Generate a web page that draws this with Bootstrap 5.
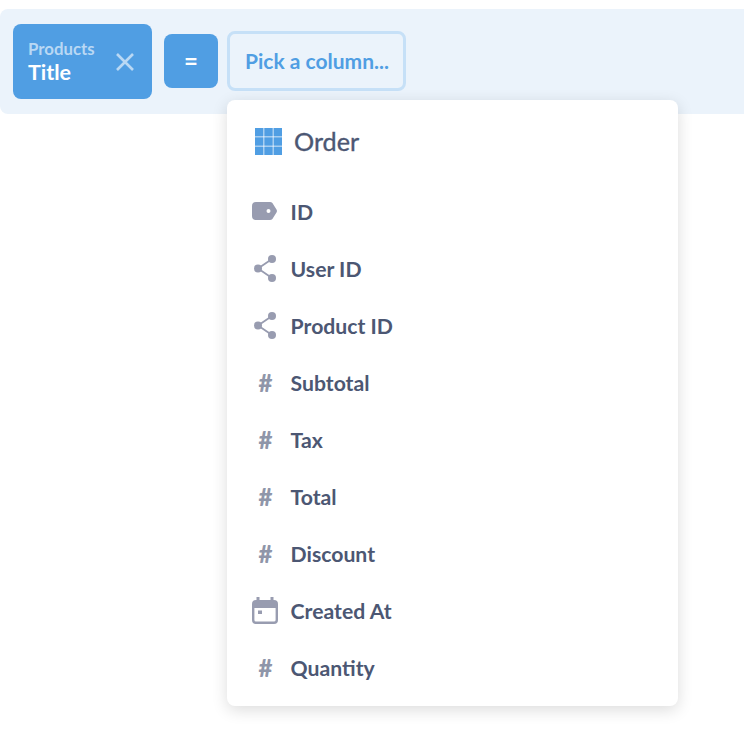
<!DOCTYPE html>
<html lang="en">
<head>
<meta charset="utf-8">
<title>Join column picker</title>
<link href="https://cdn.jsdelivr.net/npm/bootstrap@5.3.0/dist/css/bootstrap.min.css" rel="stylesheet">
<style>
body { font-family: Lato, "Liberation Sans", sans-serif; background: #fff; color: #4c5773; font-weight: 700; overflow: hidden; }
.stage { position: relative; padding-top: 9px; height: 735px; }
.join-bar { height: 105px; background: #ebf3fb; border-radius: 8px 0 0 8px; padding-left: 13px; }
.field-chip { width: 139px; height: 75px; background: #509ee3; border-radius: 8px; color: #fff; padding-left: 15px; padding-right: 18px; }
.chip-table { font-size: 16.800px; line-height: 20px; color: #b9d8f4; margin-top: -1px; }
.chip-col { font-size: 21.500px; line-height: 24px; margin-top: 1px; }
.op-btn { width: 54px; height: 54px; margin-bottom: 1px; background: #509ee3; border-radius: 8px; color: #fff; font-size: 24px; margin-left: 12px; }
.pick-btn { width: 179px; height: 60px; margin-bottom: 1px; border: 3px solid #c6e0f7; border-radius: 8px; color: #509ee3; font-size: 21px; margin-left: 9px; padding-left: 15px; }
.col-menu { position: absolute; left: 227px; top: 100px; width: 451px; height: 606px; background: #fff; border-radius: 8px; box-shadow: 0 4px 16px rgba(0,0,0,.14); }
.menu-head { height: 84px; padding-left: 28px; font-size: 25.200px; gap: 12px; font-weight: 400; -webkit-text-stroke: .35px #4c5773; }
.head-grid { margin-bottom: 1px; }
.col-row { height: 57px; font-size: 21.200px; }
.icon-slot { width: 63.600px; padding-left: 25px; flex: none; }
.icon-lift { margin-bottom: 3px; }
.share-ico { margin-left: 2px; }
.hash { width: 27px; margin-bottom: 2px; text-align: center; font-size: 24px; color: #8f96a9; font-weight: 900; }
</style>
</head>
<body>
<div class="stage">
  <div class="join-bar d-flex align-items-center">
    <div class="field-chip d-flex align-items-center justify-content-between">
      <div>
        <div class="chip-table">Products</div>
        <div class="chip-col">Title</div>
      </div>
      <svg width="18" height="18" viewBox="0 0 18 18" fill="none" stroke="#b9d8f4" stroke-width="2.600"><path d="M1 1l16 16M17 1L1 17"/></svg>
    </div>
    <div class="op-btn d-flex align-items-center justify-content-center">=</div>
    <div class="pick-btn d-flex align-items-center">Pick a column...</div>
  </div>

  <div class="col-menu">
    <div class="menu-head d-flex align-items-center">
      <svg class="head-grid" width="27" height="27" viewBox="0 0 27 27" fill="#509ee3"><path d="M0 0h8.500v8.500H0zM9.250 0h8.500v8.500h-8.500zM18.500 0H27v8.500h-8.500zM0 9.250h8.500v8.500H0zM9.250 9.250h8.500v8.500h-8.500zM18.500 9.250H27v8.500h-8.500zM0 18.500h8.500V27H0zM9.250 18.500h8.500V27h-8.500zM18.500 18.500H27V27h-8.500z"/></svg>
      <span>Order</span>
    </div>
    <div class="col-row d-flex align-items-center">
      <div class="icon-slot icon-lift"><svg class="d-block" width="25" height="18" viewBox="0 0 25 18"><path fill="#989cb0" fill-rule="evenodd" d="M4 0h14c1 0 1.800.4 2.400 1.100l4.100 6.400c.6.900.6 2.100 0 3l-4.100 6.400c-.6.700-1.400 1.100-2.400 1.100H4a4 4 0 0 1-4-4V4a4 4 0 0 1 4-4zm12.500 7a2 2 0 1 0 0 4 2 2 0 0 0 0-4z"/></svg></div>
      <span>ID</span>
    </div>
    <div class="col-row d-flex align-items-center">
      <div class="icon-slot icon-lift"><svg class="d-block share-ico" width="22" height="27" viewBox="0 0 22 27" fill="#989cb0"><path stroke="#989cb0" stroke-width="1.800" d="M18 4L4 13.500 18 23" fill="none"/><circle cx="18" cy="4" r="4"/><circle cx="4" cy="13.500" r="4"/><circle cx="18" cy="23" r="4"/></svg></div>
      <span>User ID</span>
    </div>
    <div class="col-row d-flex align-items-center">
      <div class="icon-slot icon-lift"><svg class="d-block share-ico" width="22" height="27" viewBox="0 0 22 27" fill="#989cb0"><path stroke="#989cb0" stroke-width="1.800" d="M18 4L4 13.500 18 23" fill="none"/><circle cx="18" cy="4" r="4"/><circle cx="4" cy="13.500" r="4"/><circle cx="18" cy="23" r="4"/></svg></div>
      <span>Product ID</span>
    </div>
    <div class="col-row d-flex align-items-center"><div class="icon-slot"><div class="hash">#</div></div><span>Subtotal</span></div>
    <div class="col-row d-flex align-items-center"><div class="icon-slot"><div class="hash">#</div></div><span>Tax</span></div>
    <div class="col-row d-flex align-items-center"><div class="icon-slot"><div class="hash">#</div></div><span>Total</span></div>
    <div class="col-row d-flex align-items-center"><div class="icon-slot"><div class="hash">#</div></div><span>Discount</span></div>
    <div class="col-row d-flex align-items-center">
      <div class="icon-slot icon-lift"><svg class="d-block" width="26" height="27" viewBox="0 0 26 27"><path fill="#989cb0" fill-rule="evenodd" d="M4.500 0h3v3h11V0h3v3H22a4 4 0 0 1 4 4v16a4 4 0 0 1-4 4H4a4 4 0 0 1-4-4V7a4 4 0 0 1 4-4h.500zM2.400 11v12A1.600 1.600 0 0 0 4 24.600h18a1.600 1.600 0 0 0 1.600-1.600V11zM6 13.500h4v3.500H6z"/></svg></div>
      <span>Created At</span>
    </div>
    <div class="col-row d-flex align-items-center"><div class="icon-slot"><div class="hash">#</div></div><span>Quantity</span></div>
  </div>
</div>
<script src="https://cdn.jsdelivr.net/npm/bootstrap@5.3.0/dist/js/bootstrap.bundle.min.js"></script>
</body>
</html>
